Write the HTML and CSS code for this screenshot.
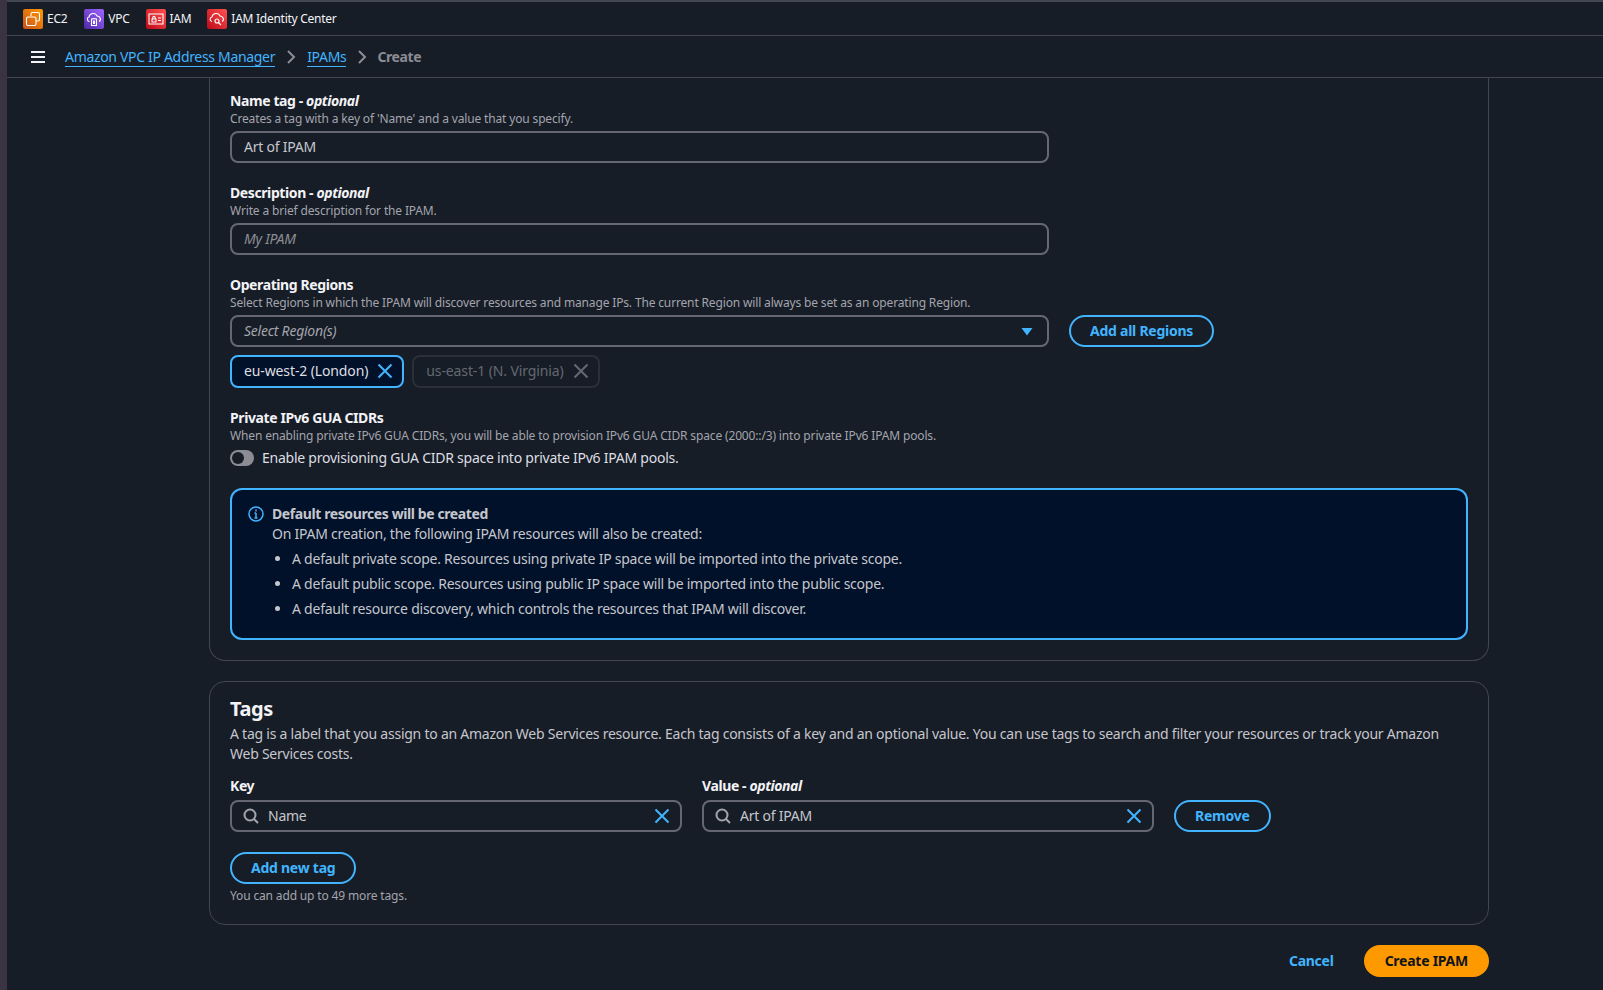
FILE: index.html
```html
<!DOCTYPE html>
<html>
<head>
    <title>Create IPAM</title>
    <link rel="stylesheet" href="styles.css">
</head>
<body>
    <div class="shell">
        <nav class="favorites">
            <a class="fav"><span class="svc ec2"><svg viewBox="0 0 20 20"><path d="M8 7V5C8 4 8.500 3.500 9.500 3.500H15C16 3.500 16.500 4 16.500 5V10.500C16.500 11.500 16 12 15 12H13"/><path d="M5 8H11.500C12.500 8 13 8.500 13 9.500V15C13 16 12.500 16.500 11.500 16.500H5C4 16.500 3.500 16 3.500 15V9.500C3.500 8.500 4 8 5 8Z"/></svg></span>EC2</a>
            <a class="fav"><span class="svc vpc"><svg viewBox="0 0 20 20"><path d="M5.500 12.500C3 12.500 2.500 8.500 5 8C5.500 4 11.500 3 13 7C16.500 7 17.500 11.500 15 12.500"/><path d="M7.500 10C9 9.500 11 9.500 12.500 10V16.500H7.500ZM9.500 11.500V15M10.500 11.500V15"/></svg></span>VPC</a>
            <a class="fav"><span class="svc iam"><svg viewBox="0 0 20 20"><path d="M3 5H17V15H3ZM6 10H10V13H6ZM6.800 10V8.500C7 7 9 7 9.200 8.500V10M12 9H15M12 11.500H15"/></svg></span>IAM</a>
            <a class="fav"><span class="svc iam"><svg viewBox="0 0 20 20"><path d="M5 12.500C2.500 12 2.500 8.500 5 8C5.500 4 11.500 3 13 7C16 7 18 11 15 12.500M8 12A2 2 0 1 0 12 12A2 2 0 1 0 8 12M11.500 13.500L14 16"/></svg></span>IAM Identity Center</a>
        </nav>
        <div class="crumbs">
            <svg class="menu" viewBox="0 0 16 16"><path d="M1 3H15M1 8H15M1 13H15"/></svg>
            <a class="crumb">Amazon VPC IP Address Manager</a>
            <svg class="chev" viewBox="0 0 16 16"><path d="M5 2L11 8L5 14"/></svg>
            <a class="crumb">IPAMs</a>
            <svg class="chev" viewBox="0 0 16 16"><path d="M5 2L11 8L5 14"/></svg>
            <span class="crumb-current">Create</span>
        </div>

        <main class="content">
            <section class="card card-cut">
                <div class="field">
                    <label>Name tag - <i>optional</i></label>
                    <p class="hint">Creates a tag with a key of 'Name' and a value that you specify.</p>
                    <div class="input wide">Art of IPAM</div>
                </div>
                <div class="field">
                    <label>Description - <i>optional</i></label>
                    <p class="hint">Write a brief description for the IPAM.</p>
                    <div class="input wide placeholder dim">My IPAM</div>
                </div>
                <div class="field">
                    <label>Operating Regions</label>
                    <p class="hint">Select Regions in which the IPAM will discover resources and manage IPs. The current Region will always be set as an operating Region.</p>
                    <div class="select-row">
                        <div class="input wide placeholder between">Select Region(s)<svg class="caret" viewBox="0 0 16 16"><path d="M2.500 5H13.500L8 12.500Z"/></svg></div>
                        <button class="btn">Add all Regions</button>
                    </div>
                    <div class="tokens">
                        <div class="token">eu-west-2 (London)<svg class="x" viewBox="0 0 16 16"><path d="M1.500 1.500L14.500 14.500M14.500 1.500L1.500 14.500"/></svg></div>
                        <div class="token disabled">us-east-1 (N. Virginia)<svg class="x" viewBox="0 0 16 16"><path d="M1.500 1.500L14.500 14.500M14.500 1.500L1.500 14.500"/></svg></div>
                    </div>
                </div>
                <div class="field">
                    <label>Private IPv6 GUA CIDRs</label>
                    <p class="hint">When enabling private IPv6 GUA CIDRs, you will be able to provision IPv6 GUA CIDR space (2000::/3) into private IPv6 IPAM pools.</p>
                    <div class="toggle-row"><span class="toggle"></span>Enable provisioning GUA CIDR space into private IPv6 IPAM pools.</div>
                </div>
                <div class="alert">
                    <svg class="info" viewBox="0 0 16 16"><circle cx="8" cy="8" r="7"/><path d="M8 7V12M6.500 12H9.500M6.500 7H8M8 3.500V5.500"/></svg>
                    <div>
                        <strong>Default resources will be created</strong>
                        <p>On IPAM creation, the following IPAM resources will also be created:</p>
                        <ul>
                            <li>A default private scope. Resources using private IP space will be imported into the private scope.</li>
                            <li>A default public scope. Resources using public IP space will be imported into the public scope.</li>
                            <li>A default resource discovery, which controls the resources that IPAM will discover.</li>
                        </ul>
                    </div>
                </div>
            </section>

            <section class="card">
                <h2>Tags</h2>
                <p class="intro">A tag is a label that you assign to an Amazon Web Services resource. Each tag consists of a key and an optional value. You can use tags to search and filter your resources or track your Amazon Web Services costs.</p>
                <div class="tag-row">
                    <div class="tag-col">
                        <label>Key</label>
                        <div class="input search"><svg class="glass" viewBox="0 0 16 16"><circle cx="7" cy="7" r="5.500"/><path d="M11 11L15 15"/></svg><span>Name</span><svg class="x" viewBox="0 0 16 16"><path d="M1.500 1.500L14.500 14.500M14.500 1.500L1.500 14.500"/></svg></div>
                    </div>
                    <div class="tag-col">
                        <label>Value - <i>optional</i></label>
                        <div class="input search"><svg class="glass" viewBox="0 0 16 16"><circle cx="7" cy="7" r="5.500"/><path d="M11 11L15 15"/></svg><span>Art of IPAM</span><svg class="x" viewBox="0 0 16 16"><path d="M1.500 1.500L14.500 14.500M14.500 1.500L1.500 14.500"/></svg></div>
                    </div>
                    <button class="btn">Remove</button>
                </div>
                <button class="btn add">Add new tag</button>
                <p class="hint">You can add up to 49 more tags.</p>
            </section>

            <div class="actions">
                <a class="cancel">Cancel</a>
                <button class="btn primary">Create IPAM</button>
            </div>
        </main>
    </div>
</body>
</html>
```
FILE: styles.css
```css
html, body { margin: 0; height: 100%; overflow: hidden; background: #3a3342; }
body { font-family: "Noto Sans", Arial, sans-serif; font-size: 14px; line-height: 20px; letter-spacing: -0.24px; color: #dedee3; }
svg { display: block; fill: none; stroke: currentColor; stroke-width: 2; }
p { margin: 0; }
label { display: block; font-weight: 700; letter-spacing: -0.4px; color: #f3f3f7; }
label i { font-weight: 700; }
button { font-family: inherit; }

.shell { margin-left: 7px; height: 990px; background: #161d26; overflow: hidden; }

.favorites { display: flex; align-items: center; gap: 16px; height: 33px; padding-left: 16px; border-top: 2px solid #424650; border-bottom: 1px solid #424650; font-size: 12px; letter-spacing: -0.27px; color: #f3f3f7; }
.fav { display: flex; align-items: center; gap: 4px; }
.fav:first-child { margin-right: 1px; }
.svc { display: block; width: 20px; height: 20px; border-radius: 2px; color: #fff; }
.svc svg { stroke-width: 1.1; }
.ec2 { background: linear-gradient(45deg, #c8511b, #ff9900); }
.vpc { background: linear-gradient(45deg, #4d27a8, #a166ff); }
.iam { background: linear-gradient(45deg, #bd0816, #ff5252); }

.crumbs { display: flex; align-items: center; height: 41px; padding-left: 23px; border-bottom: 1px solid #424650; letter-spacing: -0.32px; }
.menu { width: 16px; height: 16px; margin-right: 19px; color: #f3f3f7; }
.crumb { color: #42b4ff; border-bottom: 1px solid #42b4ff; line-height: 18px; margin-top: 2px; }
.chev { width: 16px; height: 16px; margin: 0 8px; color: #8c8c94; }
.crumb-current { margin-left: -1px; color: #8c8c94; font-weight: 700; letter-spacing: -0.4px; }

.content { padding-left: 202px; width: 1280px; }
.card { border: 1px solid #424650; border-radius: 16px; padding: 16px 20px; margin-bottom: 20px; }
.card-cut { border-top: 0; border-top-left-radius: 0; border-top-right-radius: 0; padding: 13px 20px 20px; }

.field { margin-bottom: 20px; }
.hint { font-size: 12px; line-height: 16px; letter-spacing: -0.15px; color: #a4a4ad; margin-bottom: 4px; }

.input { box-sizing: border-box; display: flex; align-items: center; height: 32px; padding: 0 12px; border: 2px solid #656871; border-radius: 8px; color: #c6c6cd; }
.wide { width: 819px; }
.placeholder { color: #a4a4ad; font-style: italic; }
.dim { color: #8c8c94; }
.between { justify-content: space-between; }
.caret { width: 16px; height: 16px; fill: #42b4ff; stroke: none; }

.select-row { display: flex; align-items: center; gap: 20px; }
.btn { box-sizing: border-box; height: 32px; padding: 0 19px 2px; background: none; border: 2px solid #42b4ff; border-radius: 20px; color: #42b4ff; font-size: 14px; font-weight: 700; letter-spacing: -0.25px; }

.tokens { display: flex; gap: 8px; margin-top: 8px; }
.token { box-sizing: border-box; display: flex; align-items: center; gap: 9px; height: 33px; padding: 0 9px 1px 12px; border: 2px solid #42b4ff; border-radius: 8px; background: #001129; letter-spacing: -0.12px; }
.token .x { width: 16px; height: 16px; color: #42b4ff; }
.token.disabled { border-color: #2a2f38; background: none; color: #656871; }
.token.disabled .x { color: #656871; }

.toggle-row { display: flex; align-items: center; gap: 8px; height: 20px; margin-top: 4px; }
.toggle { display: block; position: relative; width: 24px; height: 16px; border-radius: 8px; background: #8c8c94; }
.toggle::after { content: ""; position: absolute; left: 2px; top: 2px; width: 12px; height: 12px; border-radius: 50%; background: #161d26; }

.alert { display: flex; gap: 8px; box-sizing: border-box; height: 152px; padding: 14px 16px; border: 2px solid #42b4ff; border-radius: 12px; background: #001129; color: #c6c6cd; }
.info { width: 16px; height: 16px; flex: none; margin-top: 2px; color: #42b4ff; stroke-width: 1.5; }
.alert strong { display: block; letter-spacing: -0.4px; }
.alert ul { margin: 5px 0 0; padding-left: 20px; }
.alert li { margin-bottom: 5px; }

h2 { margin: 0; font-size: 20px; line-height: 22px; font-weight: 700; letter-spacing: -0.4px; color: #f3f3f7; }
.intro { margin-top: 4px; color: #c6c6cd; }
.tag-row { display: flex; align-items: flex-end; gap: 20px; margin-top: 12px; }
.tag-col { width: 452px; }
.search { margin-top: 4px; gap: 8px; }
.search span { flex: 1; }
.search .glass { width: 16px; height: 16px; margin: 0 1px 0 -1px; color: #a4a4ad; }
.search .x { width: 16px; height: 16px; margin-right: -2px; color: #42b4ff; }

.add { margin: 20px 0 4px; }

.actions { display: flex; justify-content: flex-end; align-items: center; gap: 30px; }
.cancel { color: #42b4ff; font-weight: 700; letter-spacing: -0.25px; }
.primary { background: #ff9900; border-color: #ff9900; color: #0f141a; }
```
